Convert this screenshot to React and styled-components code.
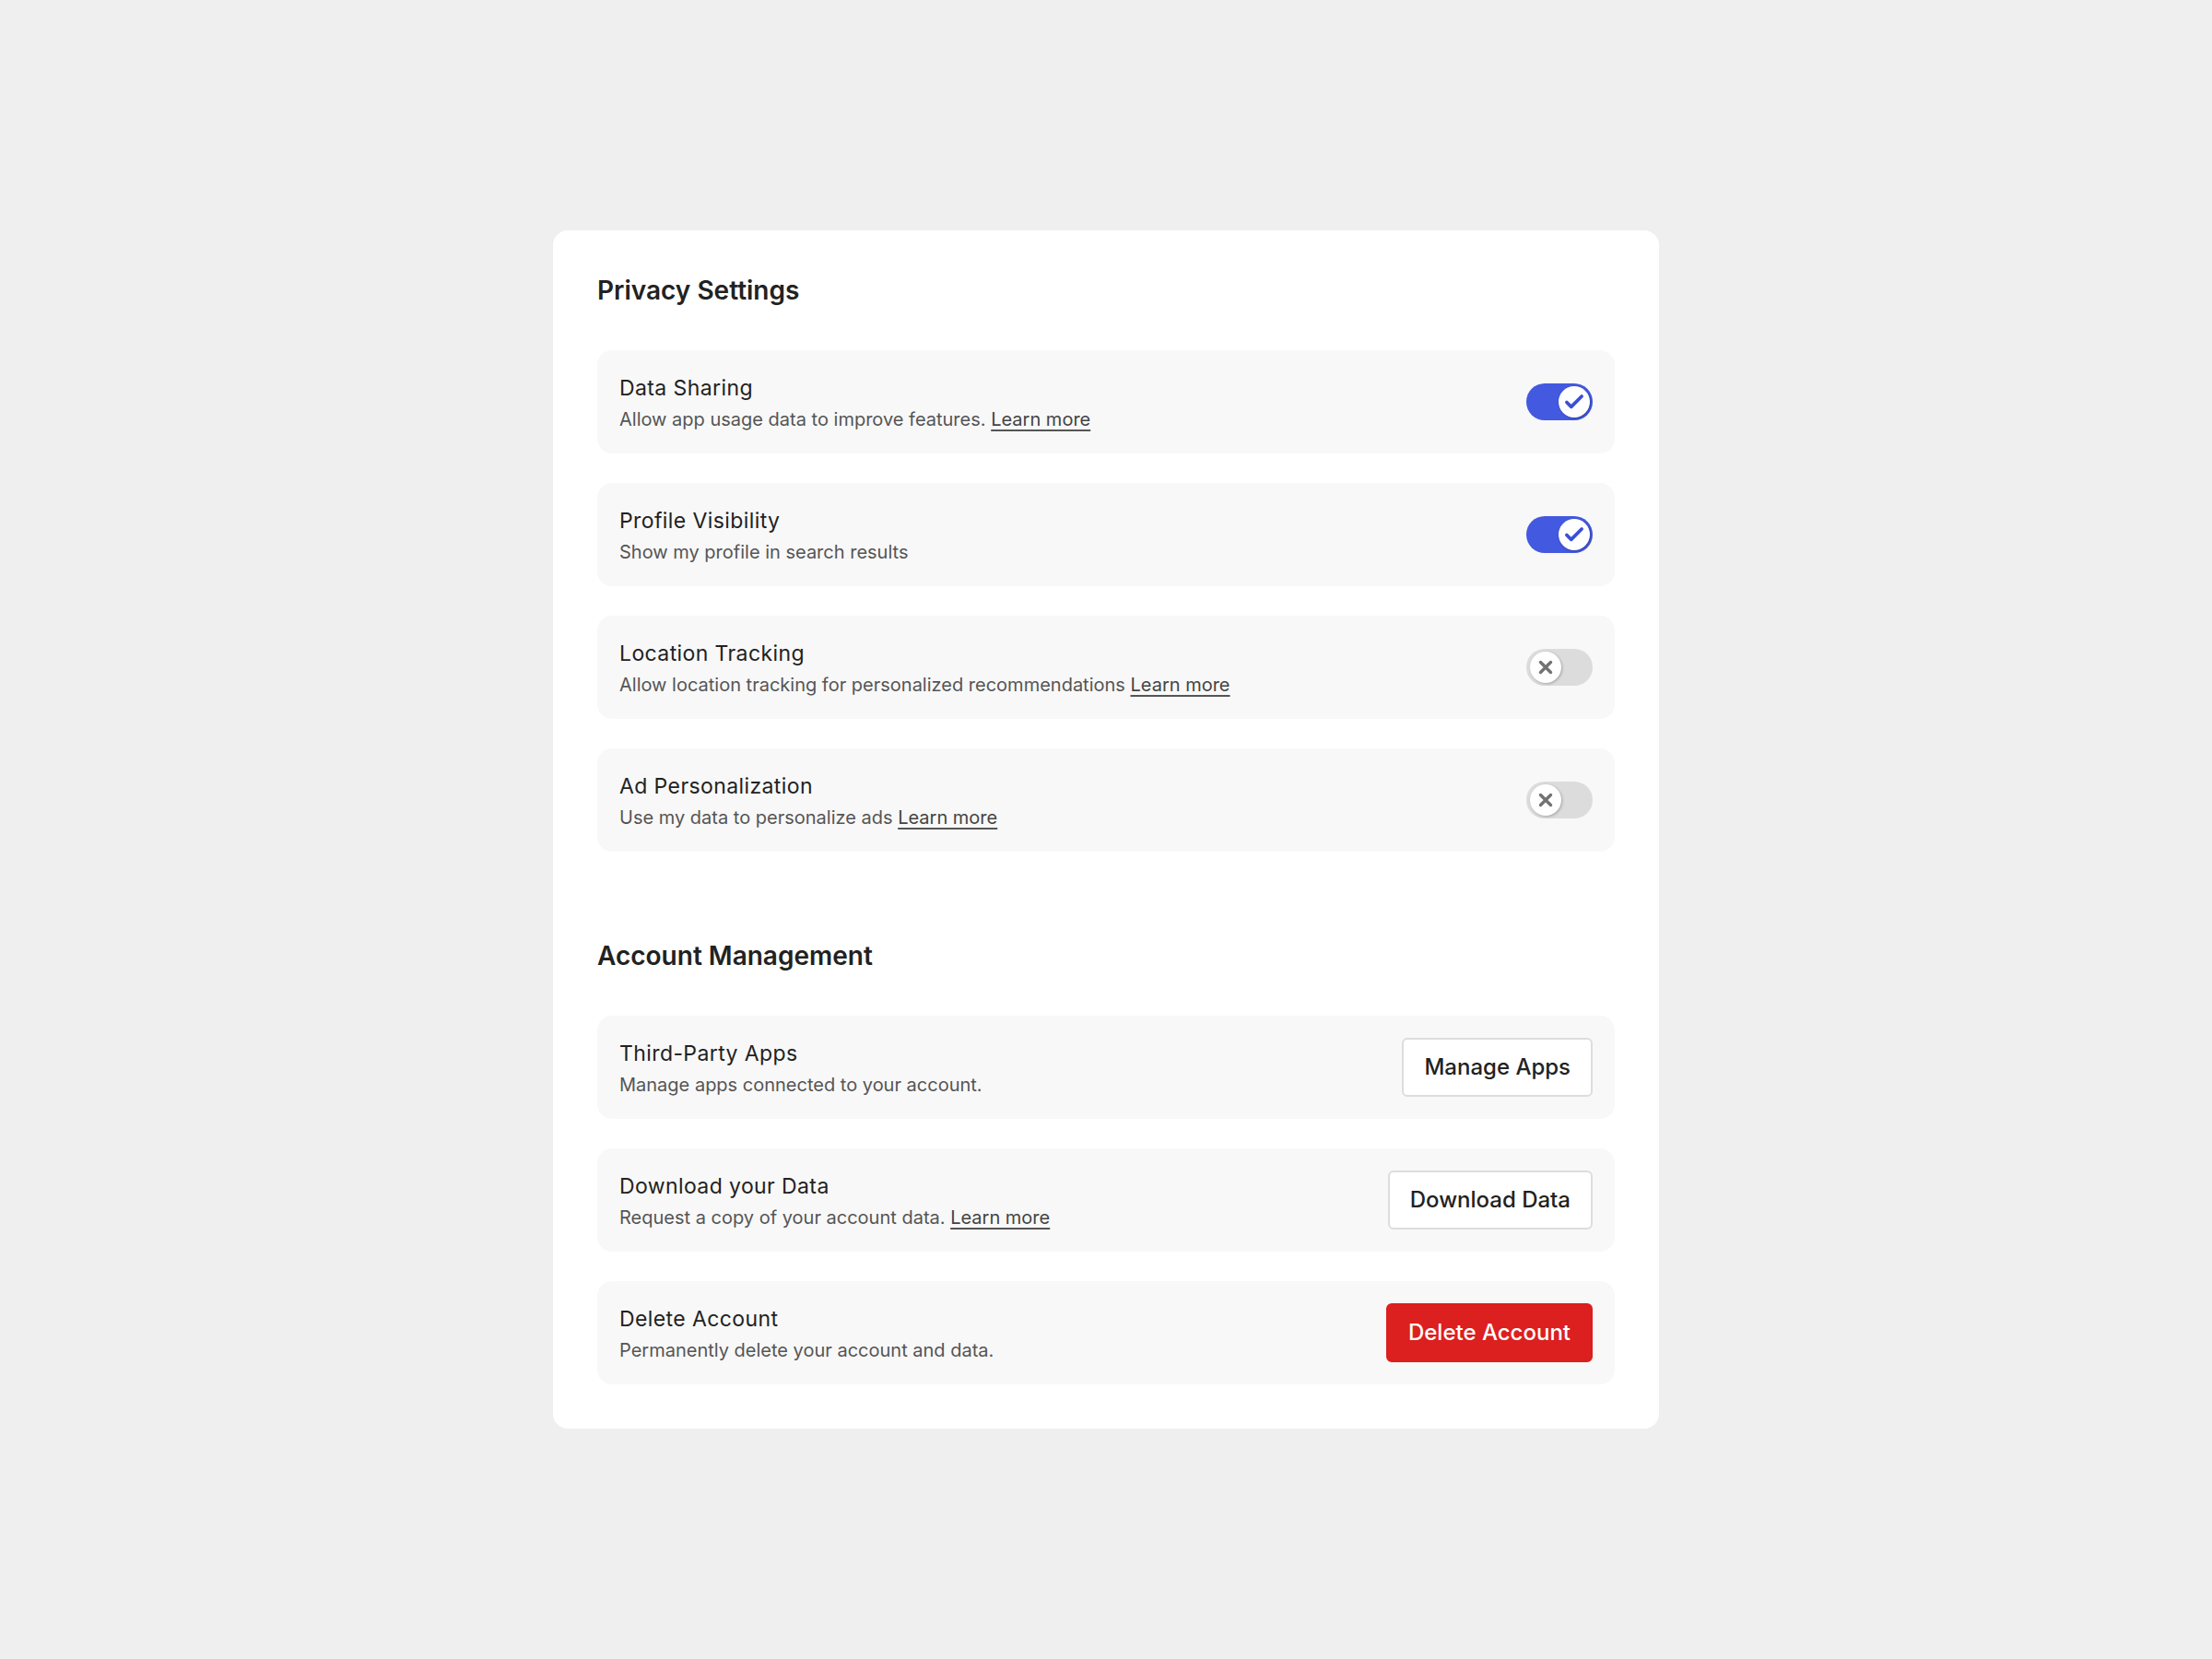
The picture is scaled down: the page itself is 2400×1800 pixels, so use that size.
import React from 'react';
import styled, { createGlobalStyle } from 'styled-components';

const GlobalStyle = createGlobalStyle`
    html, body {
        margin: 0;
        padding: 0;
        background: #efefef;
        font-family: Inter, "Noto Sans", sans-serif;
        -webkit-font-smoothing: antialiased;
    }
`;

const Page = styled.div`
    display: flex;
    justify-content: center;
    align-items: center;
    min-height: 100vh;
`;

const Card = styled.div`
    width: 1200px;
    box-sizing: border-box;
    padding: 48px;
    background: #fff;
    border-radius: 16px;
`;

const Section = styled.section`
    & + & {
        margin-top: 96px;
    }
`;

const Heading = styled.h2`
    margin: 0 0 47px;
    font-size: 28px;
    line-height: 35px;
    font-weight: 600;
    color: #222;
`;

const List = styled.div`
    display: flex;
    flex-direction: column;
    gap: 32px;
`;

const Row = styled.div`
    display: flex;
    align-items: center;
    justify-content: space-between;
    box-sizing: border-box;
    height: 112px;
    padding: 0 24px;
    background: #f8f8f8;
    border-radius: 16px;
`;

const Text = styled.div`
    display: flex;
    flex-direction: column;
    gap: 4px;
    padding-top: 3px;
`;

const Title = styled.div`
    font-size: 23px;
    line-height: 30px;
    font-weight: 400;
    letter-spacing: 0.4px;
    color: #222;
`;

const Desc = styled.div`
    font-size: 20px;
    line-height: 30px;
    color: #555;
`;

const Link = styled.a`
    color: #444;
    text-decoration: underline;
    text-underline-offset: 4px;
    text-decoration-thickness: 1.5px;
    text-decoration-color: #555;
    cursor: pointer;
`;

const Track = styled.button`
    position: relative;
    width: 72px;
    height: 40px;
    padding: 0;
    border: none;
    border-radius: 20px;
    background: ${p => (p.$on ? '#4359e0' : '#dcdcdc')};
    cursor: pointer;
    flex-shrink: 0;
`;

const Knob = styled.span`
    position: absolute;
    top: 3px;
    left: ${p => (p.$on ? '35px' : '4px')};
    width: 34px;
    height: 34px;
    border-radius: 50%;
    background: #fff;
    box-shadow: 1px 1px 3px rgba(0, 0, 0, 0.25);
    display: flex;
    align-items: center;
    justify-content: center;
`;

const Toggle = ({ on }) => (
    <Track $on={on}>
        <Knob $on={on}>
            {on ? (
                <svg width="26" height="26" viewBox="0 0 24 24" fill="none" stroke="#3a4fd6" strokeWidth="3.4" strokeLinecap="round" strokeLinejoin="round">
                    <path d="M4.5 12.5l4.5 4.5L19.5 6.5" />
                </svg>
            ) : (
                <svg width="24" height="24" viewBox="0 0 24 24" fill="none" stroke="#727272" strokeWidth="3.4" strokeLinecap="round">
                    <path d="M6.5 6.5l11 11M17.5 6.5l-11 11" />
                </svg>
            )}
        </Knob>
    </Track>
);

const Button = styled.button`
    box-sizing: border-box;
    height: 64px;
    padding: 0 22px;
    border-radius: 6px;
    font-family: Inter, sans-serif;
    font-size: 24px;
    font-weight: 500;
    line-height: 32px;
    cursor: pointer;
    flex-shrink: 0;
    border: 2px solid ${p => (p.$danger ? '#dc1f1f' : '#dddddd')};
    background: ${p => (p.$danger ? '#dc1f1f' : '#fff')};
    color: ${p => (p.$danger ? '#fff' : '#222')};
`;

const privacy = [
    { title: 'Data Sharing', desc: 'Allow app usage data to improve features.', link: true, on: true },
    { title: 'Profile Visibility', desc: 'Show my profile in search results', link: false, on: true },
    { title: 'Location Tracking', desc: 'Allow location tracking for personalized recommendations', link: true, on: false },
    { title: 'Ad Personalization', desc: 'Use my data to personalize ads', link: true, on: false },
];

const account = [
    { title: 'Third-Party Apps', desc: 'Manage apps connected to your account.', action: 'Manage Apps' },
    { title: 'Download your Data', desc: 'Request a copy of your account data.', link: true, action: 'Download Data' },
    { title: 'Delete Account', desc: 'Permanently delete your account and data.', action: 'Delete Account', danger: true },
];

const RowText = ({ title, desc, link }) => (
    <Text>
        <Title>{title}</Title>
        <Desc>
            {desc}
            {link && <> <Link>Learn more</Link></>}
        </Desc>
    </Text>
);

export default function App() {
    return (
        <Page>
            <GlobalStyle />
            <Card>
                <Section>
                    <Heading>Privacy Settings</Heading>
                    <List>
                        {privacy.map(item => (
                            <Row key={item.title}>
                                <RowText {...item} />
                                <Toggle on={item.on} />
                            </Row>
                        ))}
                    </List>
                </Section>
                <Section>
                    <Heading>Account Management</Heading>
                    <List>
                        {account.map(item => (
                            <Row key={item.title}>
                                <RowText {...item} />
                                <Button $danger={item.danger}>{item.action}</Button>
                            </Row>
                        ))}
                    </List>
                </Section>
            </Card>
        </Page>
    );
}
